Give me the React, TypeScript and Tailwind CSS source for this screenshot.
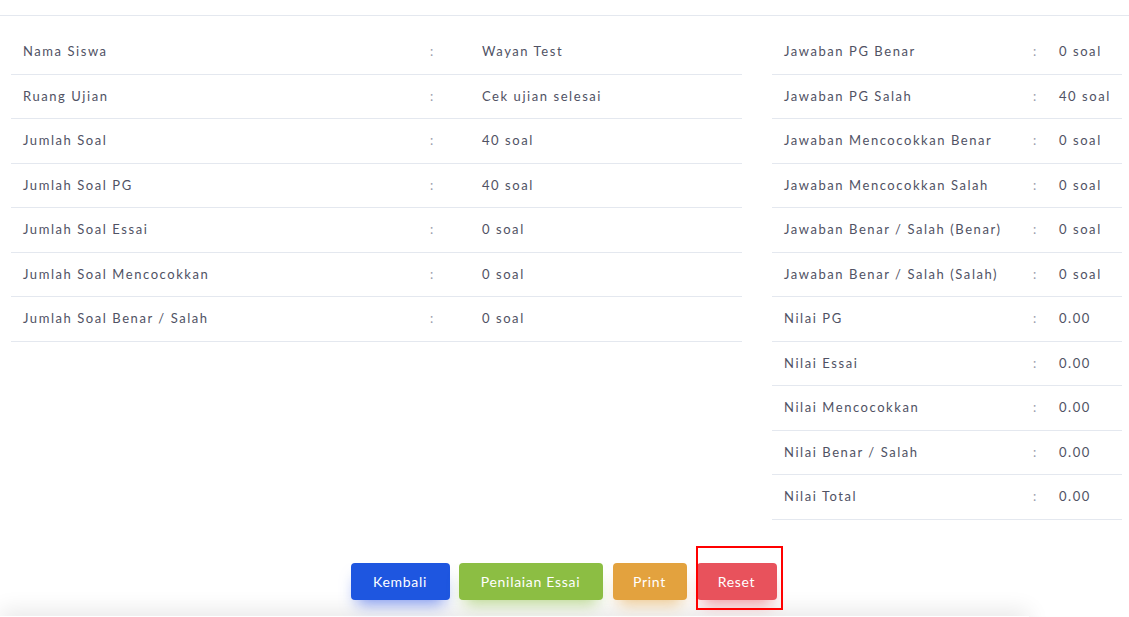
const leftRows = [
  ["Nama Siswa", "Wayan Test"],
  ["Ruang Ujian", "Cek ujian selesai"],
  ["Jumlah Soal", "40 soal"],
  ["Jumlah Soal PG", "40 soal"],
  ["Jumlah Soal Essai", "0 soal"],
  ["Jumlah Soal Mencocokkan", "0 soal"],
  ["Jumlah Soal Benar / Salah", "0 soal"],
];

const rightRows = [
  ["Jawaban PG Benar", "0 soal"],
  ["Jawaban PG Salah", "40 soal"],
  ["Jawaban Mencocokkan Benar", "0 soal"],
  ["Jawaban Mencocokkan Salah", "0 soal"],
  ["Jawaban Benar / Salah (Benar)", "0 soal"],
  ["Jawaban Benar / Salah (Salah)", "0 soal"],
  ["Nilai PG", "0.00"],
  ["Nilai Essai", "0.00"],
  ["Nilai Mencocokkan", "0.00"],
  ["Nilai Benar / Salah", "0.00"],
  ["Nilai Total", "0.00"],
];

const font = { fontFamily: "Lato, 'Noto Sans', sans-serif" };

const App = () => {
  return (
    <div className="h-[617px] overflow-hidden bg-white text-[13px] tracking-[0.12em] text-[#505264]" style={font}>
      <div className="h-[16px] border-b border-[#e4e8ef]" />
      <div className="flex pl-[11px] pr-[7px] pt-[14px] gap-[30px]">
        <div className="w-[731px]">
          {leftRows.map(([label, value]) => (
            <div key={label} className="grid grid-cols-[407px_52px_1fr] h-[44.5px] items-center border-b border-[#e4e8ef]">
              <div className="px-3">{label}</div>
              <div className="px-3 text-[#9a9cab]">:</div>
              <div className="px-3">{value}</div>
            </div>
          ))}
        </div>
        <div className="w-[350px]">
          {rightRows.map(([label, value]) => (
            <div key={label} className="grid grid-cols-[261px_26px_1fr] h-[44.5px] items-center border-b border-[#e4e8ef]">
              <div className="px-3 whitespace-nowrap">{label}</div>
              <div className="text-[#9a9cab]">:</div>
              <div className="whitespace-nowrap">{value}</div>
            </div>
          ))}
        </div>
      </div>
      <div className="flex justify-center pr-[2px] mt-[43px] text-[14px] text-white tracking-[0.05em]">
        <button className="w-[99px] h-[37px] rounded bg-[#1e56e0] shadow-[0_10px_16px_-6px_rgba(40,80,230,0.6)]">Kembali</button>
        <button className="ml-[9px] w-[144px] h-[37px] rounded bg-[#8cbe43] shadow-[0_10px_16px_-6px_rgba(140,190,67,0.6)]">Penilaian Essai</button>
        <button className="ml-[10px] w-[74px] h-[37px] rounded bg-[#e3a23e] shadow-[0_10px_16px_-6px_rgba(227,162,62,0.6)]">Print</button>
        <div className="relative ml-[10px]">
          <button className="w-[80px] h-[37px] rounded bg-[#e8525c] shadow-[0_10px_16px_-6px_rgba(232,82,92,0.6)]">Reset</button>
          <div className="absolute -left-[1px] -top-[17px] -right-[6px] -bottom-[10px] border-2 border-[#ff0000]" />
        </div>
      </div>
      <div className="mt-[16px] mr-[100px] h-10 bg-white shadow-[0_-6px_22px_rgba(0,0,0,0.09)]" />
    </div>
  );
};

export default App;
